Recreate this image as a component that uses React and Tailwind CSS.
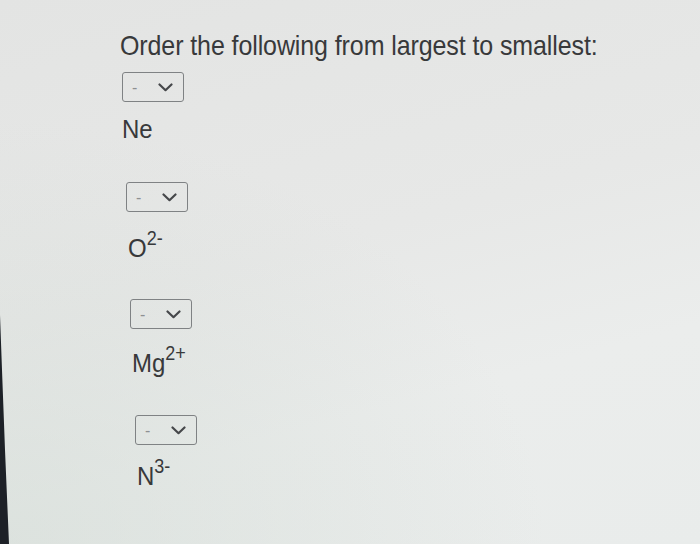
import React from "react";

function Chevron() {
  return (
    <svg width="15" height="9" viewBox="0 0 15 9" fill="none" className="block">
      <path d="M1.5 1.5 L7.5 7.2 L13.5 1.5" stroke="#45474a" strokeWidth="2.2" strokeLinecap="round" strokeLinejoin="round" />
    </svg>
  );
}

function Dropdown({ className }) {
  return (
    <div
      className={`flex h-[30px] w-[62px] items-center justify-between rounded-[3px] border border-[#7f8284] pl-[9px] pr-[10px] ${className}`}
    >
      <span className="mt-[2px] text-[16px] leading-none text-[#8e9092]">-</span>
      <Chevron />
    </div>
  );
}

function Label({ className, children }) {
  return (
    <div className={`origin-top-left scale-y-[1.1] text-[24px] leading-none ${className}`}>{children}</div>
  );
}

function Sup({ children }) {
  return <span className="relative -top-[11px] text-[18px]">{children}</span>;
}

export default function App() {
  return (
    <div
      className="relative h-[544px] w-full overflow-hidden bg-[linear-gradient(165deg,#e3e4e3_0%,#e7e8e7_45%,#ebedec_70%,#e9eceb_100%)] text-[#38393b]"
      style={{ fontFamily: '"Liberation Sans", Arial, sans-serif' }}
    >
      {/* bottom-left shade */}
      <div className="pointer-events-none absolute inset-0 bg-[radial-gradient(ellipse_at_0%_100%,rgba(205,215,208,0.5),rgba(205,215,208,0)_55%)]" />

      <div className="relative flex flex-col items-start pl-[120px] pt-[31px]">
        <h1 className="origin-top-left scale-y-[1.12] text-[25px] font-normal leading-none tracking-[-0.1px]">
          Order the following from largest to smallest:
        </h1>

        <Dropdown className="ml-[2px] mt-[16px]" />
        <Label className="ml-[2px] mt-[14px]">Ne</Label>

        <Dropdown className="ml-[6px] mt-[42px]" />
        <Label className="ml-[8px] mt-[23px]">
          O<Sup>2-</Sup>
        </Label>

        <Dropdown className="ml-[10px] mt-[40px]" />
        <Label className="ml-[12px] mt-[21px]">
          Mg<Sup>2+</Sup>
        </Label>

        <Dropdown className="ml-[15px] mt-[41px]" />
        <Label className="ml-[17px] mt-[18px]">
          N<Sup>3-</Sup>
        </Label>
      </div>

      {/* dark edge of the monitor bezel */}
      <svg className="pointer-events-none absolute left-0 top-0" width="12" height="544" viewBox="0 0 12 544">
        <polygon points="0,315 2,370 5,450 9,544 0,544" fill="#1d2127" />
      </svg>
    </div>
  );
}
